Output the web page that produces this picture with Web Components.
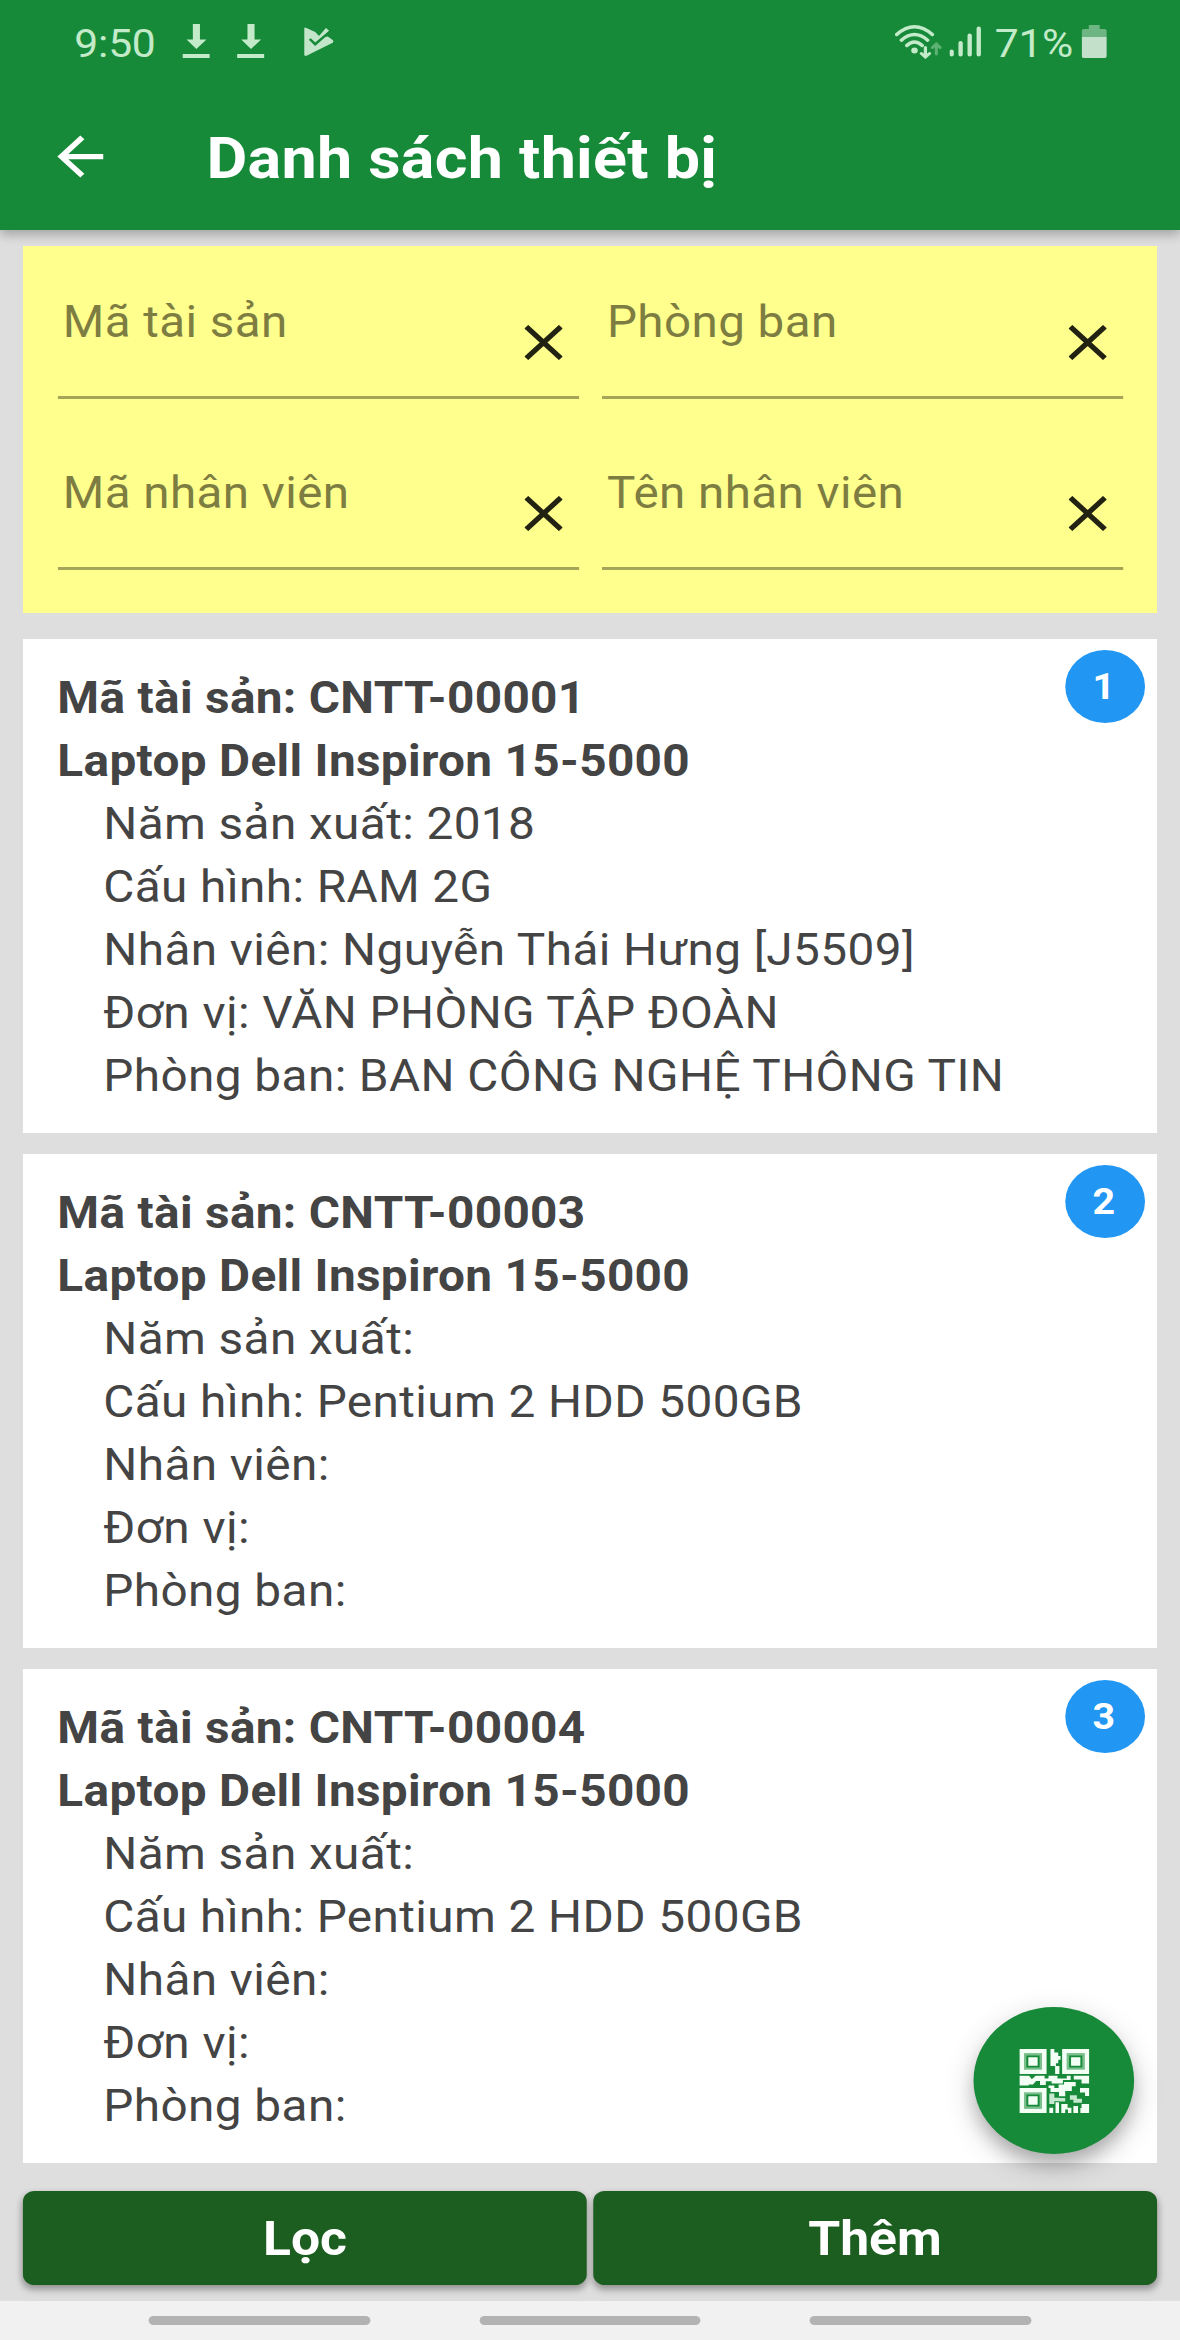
<!DOCTYPE html>
<html lang="vi">
<head>
<meta charset="utf-8">
<title>Danh sách thiết bị</title>
<style>
  html, body {
    margin: 0;
    width: 1180px;
    height: 2340px;
    overflow: hidden;
    background: #dedede;
  }
</style>
</head>
<body>
<device-app>
  <status-bar slot="top" time="9:50" battery="71%"></status-bar>
  <app-header slot="top">Danh sách thiết bị</app-header>

  <filter-panel>
    <filter-field>Mã tài sản</filter-field>
    <filter-field>Phòng ban</filter-field>
    <filter-field>Mã nhân viên</filter-field>
    <filter-field>Tên nhân viên</filter-field>
  </filter-panel>
  <device-list></device-list>

  <scan-button slot="fab"></scan-button>
  <action-button slot="actions">Lọc</action-button>
  <action-button slot="actions">Thêm</action-button>
  <nav-bar slot="nav"></nav-bar>
</device-app>

<script>
const devices = [
  {
    code: 'CNTT-00001',
    name: 'Laptop Dell Inspiron 15-5000',
    year: '2018',
    config: 'RAM 2G',
    employee: 'Nguyễn Thái Hưng [J5509]',
    unit: 'VĂN PHÒNG TẬP ĐOÀN',
    department: 'BAN CÔNG NGHỆ THÔNG TIN',
  },
  {
    code: 'CNTT-00003',
    name: 'Laptop Dell Inspiron 15-5000',
    config: 'Pentium 2 HDD 500GB',
  },
  {
    code: 'CNTT-00004',
    name: 'Laptop Dell Inspiron 15-5000',
    config: 'Pentium 2 HDD 500GB',
  },
];

class DeviceApp extends HTMLElement {
  constructor() {
    super();
    this.attachShadow({ mode: 'open' });
    // the screen is laid out 1080 wide and stretched to the window
    this.shadowRoot.innerHTML = `
      <style>
        :host {
          position: relative;
          display: flex;
          flex-direction: column;
          width: 1080px;
          height: 2340px;
          transform: scaleX(1.09259);
          transform-origin: 0 0;
          background: #dedede;
          font-family: Roboto, "Noto Sans", sans-serif;
        }
        header {
          background: #168a38;
          box-shadow: 0 5px 10px rgba(0, 0, 0, .2), 0 1px 12px rgba(0, 0, 0, .1);
        }
        main {
          flex: 1;
          padding: 16px 21px 0;
        }
        footer {
          display: flex;
          gap: 5.25px;
          padding: 0 21px 16px;
        }
        .fab {
          position: absolute;
          right: 42px;
          bottom: 186px;
        }
      </style>
      <header><slot name="top"></slot></header>
      <main><slot></slot></main>
      <div class="fab"><slot name="fab"></slot></div>
      <footer><slot name="actions"></slot></footer>
      <slot name="nav"></slot>
    `;
  }
}

class StatusBar extends HTMLElement {
  constructor() {
    super();
    this.attachShadow({ mode: 'open' });
  }

  connectedCallback() {
    const download = `
      <svg class="download" width="25" height="35" viewBox="0 0 25 35" fill="currentColor">
        <path d="M9.500 0h6.500v15.500h6L12.700 25 3.800 15.500h5.700zM0 30h25v4H0z"/>
      </svg>`;
    this.shadowRoot.innerHTML = `
      <style>
        :host {
          display: flex;
          align-items: center;
          height: 83px;
          padding: 0 67px 0 68px;
          color: #c3eac9;
          font-size: 39px;
          line-height: 46px;
        }
        svg { display: block; }
        .time { width: 98.500px; letter-spacing: -.2px; padding-top: 5px; }
        .download { margin-right: 25.300px; }
        .play { margin-left: 10.500px; margin-right: auto; }
        .wifi { margin-right: 7px; }
        .percent { margin: 0 8px 0 12px; letter-spacing: -.3px; padding-top: 5px; }
      </style>
      <div class="time">${this.getAttribute('time')}</div>
      ${download}
      ${download}
      <svg class="play" width="28" height="30" viewBox="0 0 28 30">
        <path fill="#c3e6ca" d="M.5 1.500Q.5 0 2 .7L10.500 5 14 9 20.300 1l3 2.700-4 6.300 2.700-.6 4.500 3.600q1.500 1.500 0 2.700L3 28.600Q.5 29.500.5 27.500z"/>
        <path fill="none" stroke="#168a38" stroke-width="2.400" d="M5.500 12l5 5.200L24.500 4"/>
      </svg>
      <svg class="wifi" width="43" height="34" viewBox="0 0 43 34" fill="none" stroke="currentColor" stroke-width="3.300" stroke-linecap="round">
        <path d="M1.700 9.500Q18-6 34.300 9.500M6 15.200Q18 4 30 15.200M11 20.500Q18 13.500 25 20.500"/>
        <circle cx="18" cy="25.500" r="3" fill="currentColor" stroke="none"/>
        <path d="M28 22.500v9M24.300 28.500l3.700 3.500 3.700-3.500" stroke-width="3"/>
        <path d="M38 29V19M34.500 22.500L38 19l3.500 3.500" opacity=".4" stroke-width="2.900"/>
      </svg>
      <svg width="29" height="32" viewBox="0 0 29 32" stroke="currentColor" stroke-width="4" stroke-linecap="round">
        <path d="M2 25.500v3M10.200 17v11.500M18.500 9.500v19M26.800 2.500v26"/>
      </svg>
      <div class="percent">${this.getAttribute('battery')}</div>
      <svg width="23" height="33" viewBox="0 0 23 33" fill="#c3e0cb">
        <path opacity=".5" d="M6.500 0h10v4H21q2 0 2 2v6H0V6q0-2 2-2h4.500z"/>
        <path d="M0 12h23v19q0 2-2 2H2q-2 0-2-2z"/>
      </svg>
    `;
  }
}

class AppHeader extends HTMLElement {
  constructor() {
    super();
    this.attachShadow({ mode: 'open' });
    this.shadowRoot.innerHTML = `
      <style>
        :host {
          display: flex;
          align-items: center;
          gap: 84px;
          height: 147px;
          padding-left: 42px;
          color: #fff;
          font-size: 57.500px;
          font-weight: 700;
        }
        h1 {
          margin: 0;
          padding-top: 3px;
          font: inherit;
          letter-spacing: .25px;
        }
      </style>
      <svg width="63" height="63" viewBox="0 0 24 24" fill="currentColor">
        <path d="M20 11H7.830l5.590-5.590L12 4l-8 8 8 8 1.410-1.410L7.830 13H20v-2z"/>
      </svg>
      <h1><slot></slot></h1>
    `;
  }
}

class FilterPanel extends HTMLElement {
  constructor() {
    super();
    this.attachShadow({ mode: 'open' });
    this.shadowRoot.innerHTML = `
      <style>
        :host {
          display: grid;
          grid-template-columns: 1fr 1fr;
          gap: 18px 21px;
          padding: 0 31.500px 43px;
          margin-bottom: 26px;
          background: #ffff8d;
        }
      </style>
      <slot></slot>
    `;
  }
}

class FilterField extends HTMLElement {
  constructor() {
    super();
    this.attachShadow({ mode: 'open' });
    this.shadowRoot.innerHTML = `
      <style>
        :host {
          box-sizing: border-box;
          display: flex;
          justify-content: space-between;
          height: 153px;
          padding: 52px 14.500px 0 5px;
          border-bottom: 3px solid #a5a55a;
          color: #7d7d42;
          font-size: 43.500px;
          line-height: 50px;
          letter-spacing: .4px;
        }
        svg { margin-top: 27px; }
      </style>
      <span><slot></slot></span>
      <svg width="35" height="35" viewBox="0 0 35 35" stroke="#222213" stroke-width="5">
        <path d="M1.700 1.700l31.600 31.600M33.300 1.700L1.700 33.300"/>
      </svg>
    `;
  }
}

class DeviceList extends HTMLElement {
  constructor() {
    super();
    this.attachShadow({ mode: 'open' });
  }

  connectedCallback() {
    this.shadowRoot.innerHTML = `
      <style>
        :host {
          display: flex;
          flex-direction: column;
          gap: 21px;
        }
      </style>
    `;
    devices.forEach((device, i) => {
      const card = document.createElement('device-card');
      card.index = i + 1;
      card.device = device;
      this.shadowRoot.append(card);
    });
  }
}

class DeviceCard extends HTMLElement {
  constructor() {
    super();
    this.attachShadow({ mode: 'open' });
  }

  connectedCallback() {
    const { code, name } = this.device;
    this.shadowRoot.innerHTML = `
      <style>
        :host {
          position: relative;
          display: block;
          padding: 28px 31.500px 25px 31.500px;
          background: #fff;
          color: #444;
          font-size: 43.700px;
          line-height: 63px;
          letter-spacing: .37px;
          white-space: nowrap;
        }
        .title {
          font-weight: 700;
          letter-spacing: .3px;
        }
        .details { padding-left: 42px; }
        .badge {
          position: absolute;
          top: 10.500px;
          right: 11px;
          box-sizing: border-box;
          width: 73.500px;
          height: 73.500px;
          padding-right: 2px;
          border-radius: 50%;
          background: #2196f3;
          color: #fff;
          font-size: 36px;
          font-weight: 700;
          line-height: 75px;
          letter-spacing: 0;
          text-align: center;
        }
      </style>
      <div class="title">Mã tài sản: ${code}</div>
      <div class="title">${name}</div>
      <div class="details">${this.renderDetails()}</div>
      <div class="badge">${this.index}</div>
    `;
  }

  renderDetails() {
    const { year, config, employee, unit, department } = this.device;
    const rows = [
      { label: 'Năm sản xuất', value: year },
      { label: 'Cấu hình', value: config },
      { label: 'Nhân viên', value: employee },
      { label: 'Đơn vị', value: unit },
      { label: 'Phòng ban', value: department },
    ];
    return rows
      .map((row) => `<div>${row.label}: ${row.value || ''}</div>`)
      .join('');
  }
}

class ScanButton extends HTMLElement {
  constructor() {
    super();
    this.attachShadow({ mode: 'open' });
    this.shadowRoot.innerHTML = `
      <style>
        :host {
          display: flex;
          align-items: center;
          justify-content: center;
          width: 147px;
          height: 147px;
          border-radius: 50%;
          background: #168a38;
          box-shadow: 0 12px 16px -2px rgba(0, 0, 0, .2), 0 10px 30px rgba(0, 0, 0, .2);
        }
      </style>
      <svg width="64" height="64" viewBox="0 0 18 18" fill="#f3fff5">
        <defs>
          <g id="finder">
            <path fill-rule="evenodd" d="M0 0h7v7H0zM1.200 1.200v4.600h4.600V1.200z"/>
            <path opacity=".45" fill-rule="evenodd" d="M1.200 1.200h4.600v4.600H1.200zM1.800 1.800v3.400h3.400V1.800z"/>
            <path d="M2.300 2.300h2.400v2.400H2.300z"/>
          </g>
        </defs>
        <use href="#finder"/>
        <use href="#finder" x="11"/>
        <use href="#finder" y="11"/>
        <path d="M8 0h1v1h1v1h.6v1H10v1h-.6v.8H8zM9.200 4.800h1.100V7H9.200z"/>
        <path d="M0 7.500h2.500l.7 1 1-1h2.300v.8h1V7.500h2.300v.8h2.400v-.8h1v1.200h-2v1H8.300v-.6H6.800v1H5.300V9H4.300l-.8 1H2.400v.3H0z"/>
        <path d="M14 7.500h4v2.200h-2V8.600h-2zM11.500 9.300h3v1.200h-1v1.300h-1.700v1.500h-1.600v-1.200H8V11h2.100v-1h1.400zM7.500 10.300h1.500v.7H7.500zM15.600 11H18v2.200h-1.100v-1h-1.300z"/>
        <path opacity=".8" d="M7.700 12.500H9v1.200h1.400v1H9v.8H7.700zM13 13h1.800v1h1.300v1.100h-2.200v-.8H13zM10.300 13.800h1.500v1h-1.500z"/>
        <path d="M7.700 16.500h1V18h-1zM9.300 15h.9v3h-.9zM10.800 15.500h1.600v1h1v1.500h-.9v-1h-.7v1h-1zM13.900 16h1.200v2h-1.200zM16 15.500h2V18h-2.300v-1.400h.3z"/>
      </svg>
    `;
  }
}

class ActionButton extends HTMLElement {
  constructor() {
    super();
    this.attachShadow({ mode: 'open' });
    this.shadowRoot.innerHTML = `
      <style>
        :host {
          flex: 1;
          box-sizing: border-box;
          height: 94.500px;
          padding-top: 2px;
          border-radius: 10.500px;
          background: #1b5e20;
          box-shadow: 0 5px 7px rgba(0, 0, 0, .26), 0 2px 7px rgba(0, 0, 0, .12);
          color: #fff;
          font-size: 47.250px;
          font-weight: 700;
          line-height: 93px;
          text-align: center;
        }
      </style>
      <slot></slot>
    `;
  }
}

class NavBar extends HTMLElement {
  constructor() {
    super();
    this.attachShadow({ mode: 'open' });
    this.shadowRoot.innerHTML = `
      <style>
        :host {
          position: relative;
          display: flex;
          align-items: center;
          justify-content: center;
          gap: 100px;
          height: 39px;
          background: #f1f1f1;
        }
        i {
          width: 202.500px;
          height: 9px;
          border-radius: 5px;
          background: #b3b3b3;
        }
      </style>
      <i></i><i></i><i></i>
    `;
  }
}

customElements.define('device-app', DeviceApp);
customElements.define('status-bar', StatusBar);
customElements.define('app-header', AppHeader);
customElements.define('filter-panel', FilterPanel);
customElements.define('filter-field', FilterField);
customElements.define('device-card', DeviceCard);
customElements.define('device-list', DeviceList);
customElements.define('scan-button', ScanButton);
customElements.define('action-button', ActionButton);
customElements.define('nav-bar', NavBar);
</script>
</body>
</html>
